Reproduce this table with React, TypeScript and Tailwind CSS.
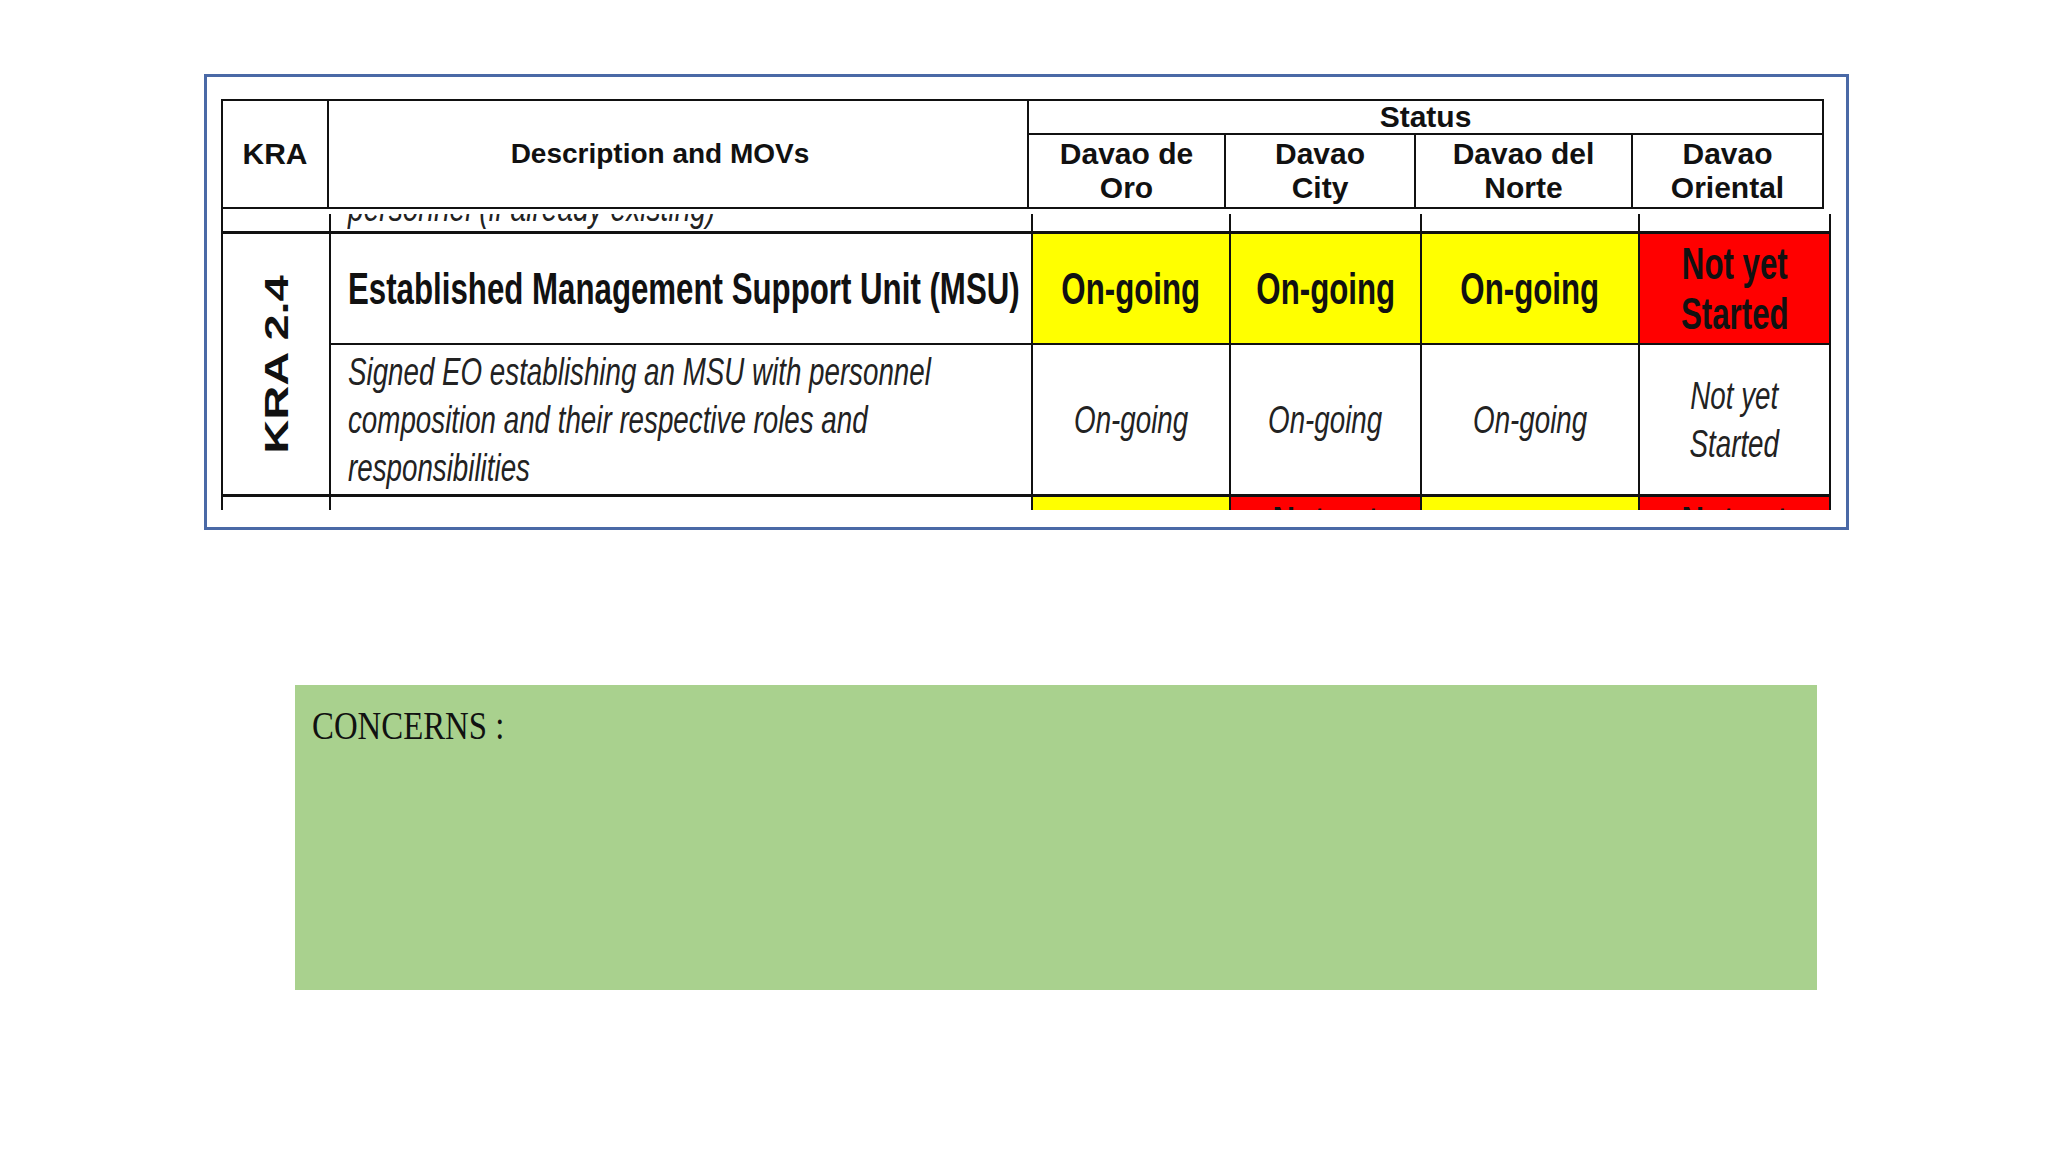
const heads = [
  { w: "w-[197px] border-r-2", lines: ["Davao de", "Oro"] },
  { w: "w-[190px] border-r-2", lines: ["Davao", "City"] },
  { w: "w-[217px] border-r-2", lines: ["Davao del", "Norte"] },
  { w: "flex-1", lines: ["Davao", "Oriental"] },
];

// body status columns, each carries its own right rule
const cols = ["w-[198px]", "w-[191px]", "w-[218px]", "w-[191px]"];

const msu = [
  { bg: "bg-[#ffff00]", text: ["On-going"] },
  { bg: "bg-[#ffff00]", text: ["On-going"] },
  { bg: "bg-[#ffff00]", text: ["On-going"] },
  { bg: "bg-[#ff0000]", text: ["Not yet", "Started"] },
];

const movs = [["On-going"], ["On-going"], ["On-going"], ["Not yet", "Started"]];

const strip = ["bg-[#ffff00]", "bg-[#ff0000]", "bg-[#ffff00]", "bg-[#ff0000]"];

export default function App() {
  return (
    <div className="w-[2048px] h-[1152px] bg-white pt-[74px] font-['Liberation_Sans',Arial,sans-serif] text-[#111]">
      {/* pasted table picture */}
      <div className="ml-[204px] w-[1645px] h-[456px] border-[3px] border-[#4a69a6] pt-[22px] pl-[14px]">
        {/* header */}
        <div className="flex w-[1603px] h-[110px] border-2 border-[#111] text-[30px] font-bold leading-[34px]">
          <div className="w-[106px] border-r-2 border-[#111] flex items-center justify-center">KRA</div>
          <div className="w-[700px] border-r-2 border-[#111] flex items-center justify-center pr-[36px] text-[28px]">
            Description and MOVs
          </div>
          <div className="flex-1 flex flex-col">
            <div className="h-[34px] border-b-2 border-[#111] flex items-center justify-center">Status</div>
            <div className="flex-1 flex">
              {heads.map((h, i) => (
                <div key={i} className={`${h.w} border-[#111] flex items-center justify-center text-center`}>
                  <span>
                    {h.lines[0]}
                    <br />
                    {h.lines[1]}
                  </span>
                </div>
              ))}
            </div>
          </div>
        </div>

        {/* body */}
        <div className="w-[1610px] flex flex-col border-l-2 border-[#111]">
          {/* cut-off row above */}
          <div className="flex h-[22px]">
            <div className="w-[108px] pt-[5px]">
              <div className="h-full border-r-2 border-[#111]" />
            </div>
            <div className="w-[702px] pt-[5px]">
              <div className="h-full border-r-2 border-[#111] overflow-hidden">
                <div className="-mt-[25px] pl-[17px] italic text-[38px] leading-[38px] text-[#222]">
                  <span className="inline-block origin-left scale-x-[0.74] whitespace-nowrap">
                    personnel (if already existing)
                  </span>
                </div>
              </div>
            </div>
            {cols.map((w, i) => (
              <div key={i} className={`${w} pt-[5px]`}>
                <div className="h-full border-r-2 border-[#111]" />
              </div>
            ))}
          </div>
          <div className="h-[3px] bg-[#111]" />

          {/* KRA 2.4 */}
          <div className="flex h-[260px]">
            <div className="w-[108px] border-r-2 border-[#111] flex items-center justify-center">
              <span className="inline-block -rotate-90 scale-y-[0.7] whitespace-nowrap text-[47px] font-bold leading-none">
                KRA 2.4
              </span>
            </div>
            <div className="flex-1 flex flex-col">
              <div className="flex h-[111px] border-b-2 border-[#111]">
                <div className="w-[702px] border-r-2 border-[#111] flex items-center pl-[17px]">
                  <span className="inline-block origin-left scale-x-[0.71] whitespace-nowrap text-[44px] font-bold leading-none">
                    Established Management Support Unit (MSU)
                  </span>
                </div>
                {msu.map((c, i) => (
                  <div
                    key={i}
                    className={`${cols[i]} ${c.bg} border-r-2 border-[#111] flex items-center justify-center text-center`}
                  >
                    <span className="inline-block scale-x-[0.71] whitespace-nowrap text-[44px] font-bold leading-[50px]">
                      {c.text.map((t, j) => (
                        <span key={j} className="block">
                          {t}
                        </span>
                      ))}
                    </span>
                  </div>
                ))}
              </div>
              <div className="flex flex-1">
                <div className="w-[702px] border-r-2 border-[#111] flex items-center pl-[17px]">
                  <span className="inline-block origin-left scale-x-[0.73] whitespace-nowrap italic text-[38px] leading-[48px] text-[#222]">
                    Signed EO establishing an MSU with personnel
                    <br />
                    composition and their respective roles and
                    <br />
                    responsibilities
                  </span>
                </div>
                {movs.map((t, i) => (
                  <div
                    key={i}
                    className={`${cols[i]} border-r-2 border-[#111] flex items-center justify-center text-center`}
                  >
                    <span className="inline-block scale-x-[0.73] whitespace-nowrap italic text-[38px] leading-[48px] text-[#222]">
                      {t.map((s, j) => (
                        <span key={j} className="block">
                          {s}
                        </span>
                      ))}
                    </span>
                  </div>
                ))}
              </div>
            </div>
          </div>
          <div className="h-[3px] bg-[#111]" />

          {/* next row, cut off */}
          <div className="flex h-[13px]">
            <div className="w-[108px] border-r-2 border-[#111]" />
            <div className="w-[702px] border-r-2 border-[#111]" />
            {strip.map((bg, i) => (
              <div
                key={i}
                className={`${cols[i]} ${bg} border-r-2 border-[#111] overflow-hidden flex justify-center pt-[1px]`}
              >
                {bg === "bg-[#ff0000]" && (
                  <span className="inline-block scale-x-[0.71] whitespace-nowrap text-[44px] font-bold leading-[50px]">
                    Not yet
                  </span>
                )}
              </div>
            ))}
          </div>
        </div>
      </div>

      {/* concerns box */}
      <div className="mt-[155px] ml-[295px] w-[1522px] h-[305px] bg-[#a9d18e] pt-[21px] pl-[17px]">
        <span className="inline-block origin-left scale-x-[0.82] whitespace-nowrap font-['Liberation_Serif',serif] text-[40px] leading-[40px] text-[#111]">
          CONCERNS :
        </span>
      </div>
    </div>
  );
}
